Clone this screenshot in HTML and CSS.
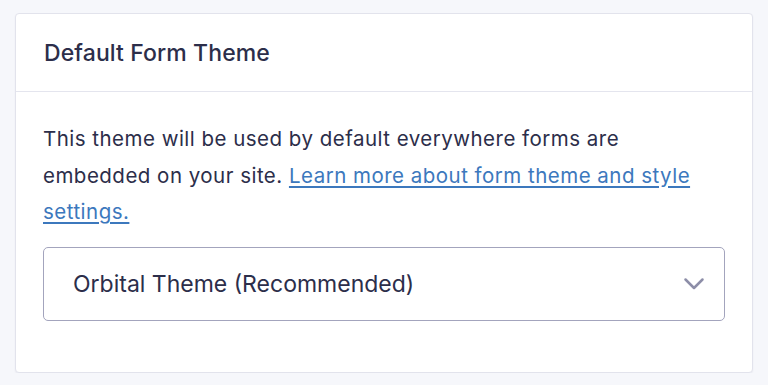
FILE: index.html
```html
<!DOCTYPE html>
<html lang="en">
<head>
  <meta charset="UTF-8" />
  <title>Default Form Theme</title>
  <link rel="stylesheet" href="styles.css">
</head>
<body>
  <div class="card">
    <div class="card-header">
      <h2>Default Form Theme</h2>
    </div>
    <div class="card-body">
      <p>This theme will be used by default everywhere forms are embedded on your site. <a href="#">Learn more about form theme and style settings.</a></p>
      <div class="select">
        <span>Orbital Theme (Recommended)</span>
        <svg class="chevron" width="22" height="14" viewBox="0 0 22 14">
          <path d="M2.5 2.5 L11 11 L19.5 2.5" fill="none" stroke="#8d8ea8" stroke-width="2.5" stroke-linecap="round" stroke-linejoin="round"/>
        </svg>
      </div>
    </div>
  </div>
</body>
</html>
```

FILE: styles.css
```css
body {
  margin: 0;
  background: #f6f7fb;
  font-family: Inter, "Noto Sans", sans-serif;
  color: #2c2e4a;
  padding: 13px 15px 0 15px;
}
.card {
  background: #fff;
  border: 1px solid #e2e3ec;
  border-radius: 4px;
  width: 736px;
  box-shadow: 0 1px 2px rgba(40, 40, 80, 0.06);
}
.card-header {
  height: 77px;
  border-bottom: 1px solid #e4e5ee;
  display: flex;
  align-items: center;
  padding: 0 28px;
}
.card-header h2 {
  margin: 0;
  font-size: 23px;
  font-weight: 500;
  letter-spacing: 0.1px;
}
.card-body {
  padding: 29px 27px 51px 27px;
}
.card-body p {
  margin: 0 0 16px 0;
  max-width: 664px;
  font-size: 20.5px;
  letter-spacing: 0.48px;
  line-height: 36.5px;
}
.card-body a {
  color: #3c78bd;
  text-decoration: underline;
  text-underline-offset: 3px;
}
.select {
  height: 72px;
  border: 1.5px solid #a3a4bd;
  border-radius: 5px;
  display: flex;
  align-items: center;
  justify-content: space-between;
  padding: 0 19px 0 29px;
  font-size: 23px;
}
.chevron {
  display: block;
}
```
